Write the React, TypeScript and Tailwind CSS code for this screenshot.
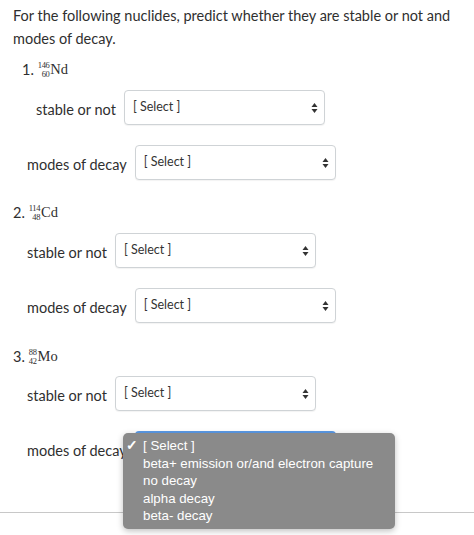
import React from "react";

const SelectArrows = () => (
	<svg width="7" height="12" viewBox="0 0 7 12" className="shrink-0">
		<path d="M3.5 1 L6.5 5 L0.5 5 Z" fill="#333" />
		<path d="M3.5 11 L6.5 7 L0.5 7 Z" fill="#333" />
	</svg>
);

const SelectBox = ({ focused = false }: { focused?: boolean }) => (
	<div
		className={
			focused
				? "flex items-center justify-between w-[201px] h-[35px] pl-[7px] pr-[5px] rounded-[4px] border-2 border-[#5b9ae6] bg-white"
				: "flex items-center justify-between w-[201px] h-[35px] pl-[8px] pr-[6px] rounded-[4px] border border-[#cfd3d6] bg-white shadow-[0_1px_1px_rgba(0,0,0,0.05)]"
		}
	>
		<span className="text-[12.5px] text-[#333] -mt-[1px]">[ Select ]</span>
		<SelectArrows />
	</div>
);

const Row = ({
	label,
	padLeft,
	focused,
}: {
	label: string;
	padLeft: string;
	focused?: boolean;
}) => (
	<div className={`flex items-center gap-[8px] ${padLeft}`}>
		<span className="text-[14.5px] pt-[5px]">{label}</span>
		<SelectBox focused={focused} />
	</div>
);

const Nuclide = ({ mass, z, sym }: { mass: string; z: string; sym: string }) => (
	<span className="inline-flex items-center font-['Liberation_Serif',serif]">
		<span className="inline-flex flex-col items-end text-[8.5px] leading-[9px] tracking-tighter">
			<span>{mass}</span>
			<span>{z}</span>
		</span>
		<span className="text-[14.5px] ml-[1px]">{sym}</span>
	</span>
);

const Heading = ({ n, children, padLeft }: { n: string; children: React.ReactNode; padLeft: string }) => (
	<div className={`flex items-center h-[20px] gap-[4px] text-[14.5px] ${padLeft}`}>
		<span>{n}</span>
		{children}
	</div>
);

export default function App() {
	return (
		<div className="relative w-[474px] h-[535px] overflow-hidden bg-white font-['Lato',sans-serif] text-[#2f2f2f]">
			<p className="pt-[4px] pl-[13px] pr-[8px] text-[14.5px] leading-[23px]">
				For the following nuclides, predict whether they are stable or not and modes of decay.
			</p>

			<div className="mt-[10px]">
				<Heading n="1." padLeft="pl-[22px]">
					<Nuclide mass="146" z="60" sym="Nd" />
				</Heading>
				<div className="mt-[10px]">
					<Row label="stable or not" padLeft="pl-[36px]" />
				</div>
				<div className="mt-[20px]">
					<Row label="modes of decay" padLeft="pl-[27px]" />
				</div>
			</div>

			<div className="mt-[23px]">
				<Heading n="2." padLeft="pl-[13px]">
					<Nuclide mass="114" z="48" sym="Cd" />
				</Heading>
				<div className="mt-[10px]">
					<Row label="stable or not" padLeft="pl-[27px]" />
				</div>
				<div className="mt-[20px]">
					<Row label="modes of decay" padLeft="pl-[27px]" />
				</div>
			</div>

			<div className="mt-[24px]">
				<Heading n="3." padLeft="pl-[13px]">
					<Nuclide mass="88" z="42" sym="Mo" />
				</Heading>
				<div className="mt-[9px]">
					<Row label="stable or not" padLeft="pl-[27px]" />
				</div>
				<div className="mt-[20px]">
					<Row label="modes of decay" padLeft="pl-[27px]" focused />
				</div>
			</div>

			<hr className="mt-[46px] border-t border-[#c8c8c8]" />

			<div className="absolute left-[123px] top-[433px] w-[272px] h-[96px] rounded-[5px] bg-[#8a8a8a] shadow-[0_2px_6px_rgba(0,0,0,0.25)] pt-[4px] font-['Liberation_Sans',Arial,sans-serif] text-[13.3px] leading-[17.5px] text-white">
				<div className="flex items-center">
					<span className="w-[20px] pl-[3px] text-[14px] font-bold">✓</span>
					<span>[ Select ]</span>
				</div>
				<div className="pl-[20px]">beta+ emission or/and electron capture</div>
				<div className="pl-[20px]">no decay</div>
				<div className="pl-[20px]">alpha decay</div>
				<div className="pl-[20px]">beta- decay</div>
			</div>
		</div>
	);
}
